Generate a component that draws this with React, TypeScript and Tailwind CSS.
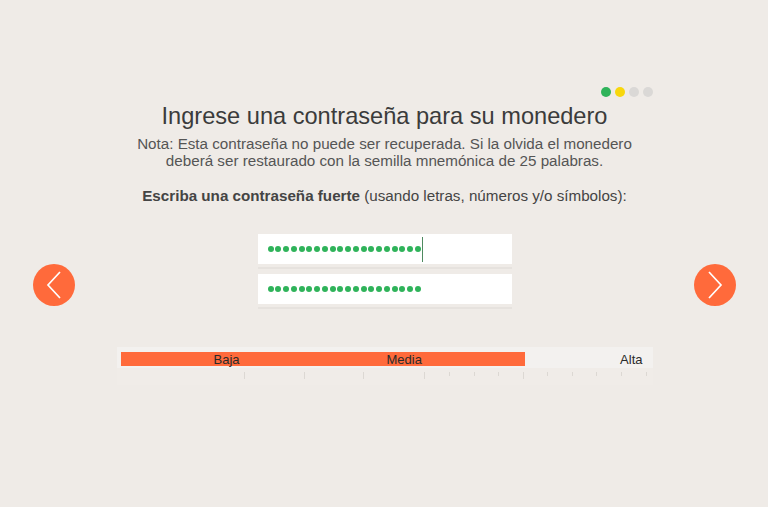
import React from 'react';

const font = { fontFamily: '"Liberation Sans", Arial, sans-serif' };

function ArrowButton({ dir }: { dir: 'left' | 'right' }) {
  return (
    <button className="mt-[264px] w-[42px] h-[42px] rounded-full bg-[#ff6a3b] flex items-center justify-center shrink-0">
      <svg width="16" height="28" viewBox="0 0 16 28" fill="none">
        {dir === 'left' ? (
          <path d="M14 1 L2 14 L14 27" stroke="white" strokeWidth="1.7" />
        ) : (
          <path d="M2 1 L14 14 L2 27" stroke="white" strokeWidth="1.7" />
        )}
      </svg>
    </button>
  );
}

function PasswordField({ count, caret }: { count: number; caret?: boolean }) {
  return (
    <div className="border-b-2 border-[#e6e2de] pb-[3px]">
      <div className="h-[30px] bg-white flex items-center pl-[10px]">
        <div className="flex gap-[1.75px]">
          {Array.from({ length: count }).map((_, i) => (
            <span key={i} className="w-[6px] h-[6px] rounded-full bg-[#2fb35a]" />
          ))}
        </div>
        {caret && <span className="ml-px w-px h-[25px] bg-[#4f8a60]" />}
      </div>
    </div>
  );
}

const ticks = [
  { x: 244, big: true }, { x: 304, big: true }, { x: 363, big: true }, { x: 424, big: true },
  { x: 449 }, { x: 474 }, { x: 498 }, { x: 523, big: true }, { x: 547 }, { x: 572 },
  { x: 596 }, { x: 621 }, { x: 646 },
];

function StrengthMeter() {
  const left = 117;
  return (
    <div className="mt-[38px]">
      <div className="relative h-[21px] bg-[#f3f1ef] pt-[5px] pb-[2px] pl-[4px] pr-[3px]">
        <div className="h-[14px] w-[404px] bg-[#ff6a3b]" />
        <span className="absolute left-[97px] top-[2.5px] text-[13px] text-[#2a2a2a]">Baja</span>
        <span className="absolute left-[270px] top-[2.5px] text-[13px] text-[#2a2a2a]">Media</span>
        <span className="absolute right-[10px] top-[2.5px] text-[13px] text-[#2a2a2a]">Alta</span>
      </div>
      <div className="h-[17px] bg-[#f0ece8]">
        <svg width="536" height="17" viewBox="0 0 536 17">
          {ticks.map((t, i) => (
            <line
              key={i}
              x1={t.x - left + 0.5}
              x2={t.x - left + 0.5}
              y1={4}
              y2={t.big ? 11 : 8}
              stroke="#dcd8d3"
              strokeWidth="1"
            />
          ))}
        </svg>
      </div>
    </div>
  );
}

export default function App() {
  return (
    <div className="w-full h-[507px] bg-[#efebe7] flex pl-[33px] pr-[32px] overflow-hidden" style={font}>
      <ArrowButton dir="left" />
      <div className="flex-1 flex justify-center">
        <div className="w-[536px] pt-[87px] flex flex-col">
          <div className="flex justify-end gap-[4px]">
            <span className="w-[10px] h-[10px] rounded-full bg-[#2fb35a]" />
            <span className="w-[10px] h-[10px] rounded-full bg-[#f8d70c]" />
            <span className="w-[10px] h-[10px] rounded-full bg-[#dad8d6]" />
            <span className="w-[10px] h-[10px] rounded-full bg-[#dad8d6]" />
          </div>
          <h1 className="mt-[6px] text-[23.6px] leading-[26px] text-[#3b3b3b] text-center whitespace-nowrap">
            Ingrese una contraseña para su monedero
          </h1>
          <p className="mt-[5.5px] text-[15.2px] leading-[17px] text-[#555555] text-center whitespace-nowrap">
            Nota: Esta contraseña no puede ser recuperada. Si la olvida el monedero
            <br />
            deberá ser restaurado con la semilla mnemónica de 25 palabras.
          </p>
          <p className="mt-[18px] text-[15.2px] leading-[17px] text-[#444444] text-center whitespace-nowrap">
            <span className="font-bold">Escriba una contraseña fuerte</span> (usando letras, números y/o símbolos):
          </p>
          <div className="mt-[30.5px] w-[254px] mx-auto flex flex-col gap-[5px]">
            <PasswordField count={20} caret />
            <PasswordField count={20} />
          </div>
          <StrengthMeter />
        </div>
      </div>
      <ArrowButton dir="right" />
    </div>
  );
}
